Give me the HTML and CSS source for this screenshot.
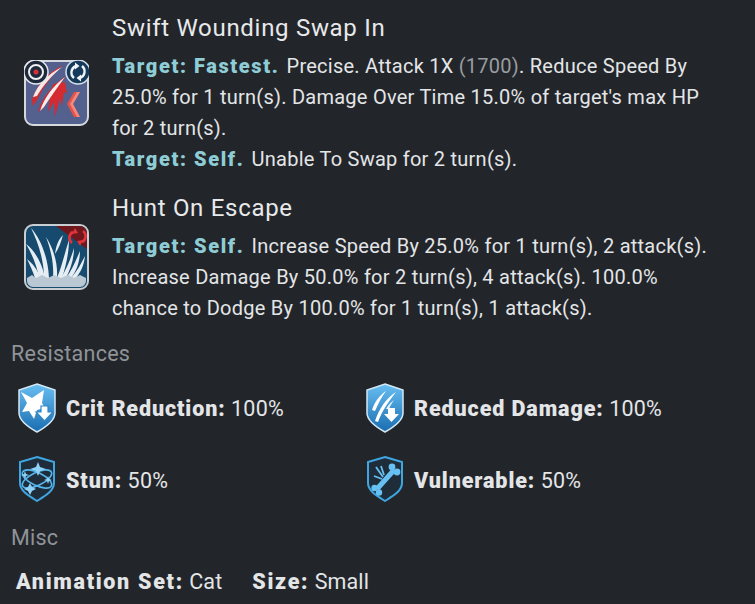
FILE: index.html
```html
<!DOCTYPE html>
<html lang="en">
<head>
<meta charset="utf-8">
<title>Abilities</title>
<link rel="stylesheet" href="styles.css">
</head>
<body>
<section class="ability ability-first">
  <div class="ability-icon icon-swap">
    <svg viewBox="0 0 65 66" width="65" height="66">
      <rect x="1" y="1" width="63" height="64" rx="8" fill="#54608e" stroke="#d5d9de" stroke-width="2"/>
      <path d="M29 24 L41 22 L43 34 L40 32 L38 46 L36 38 L31 57 L30 42 L24 52 L26 36Z" fill="#d42a30"/>
      <path d="M8 40 C12 26 22 14 39 5 C28 15 20 26 13 40 L9 46Z" fill="#d42a30"/>
      <path d="M9 37 C14 24 24 14 38 7 C27 16 19 26 13 36Z" fill="#f4e8e8"/>
      <path d="M14 52 C18 38 28 25 42 16 C33 27 26 38 19 48Z" fill="#d42a30"/>
      <path d="M16 51 C20 38 29 26 41 17 C33 28 26 38 20 47Z" fill="#f6eeee"/>
      <path d="M56 32 L49 44 L56 57 H50 L43 44 L50 32Z" fill="#e8524a"/>
      <path d="M56 32 L49 44 L56 57 H53 L46 44 L53 32Z" fill="#f08a7e"/>
      <circle cx="12" cy="12" r="12" fill="#1e2a3c" stroke="#e8eaee" stroke-width="1.500"/>
      <circle cx="12" cy="12" r="7" fill="none" stroke="#eef0f2" stroke-width="2"/>
      <circle cx="12" cy="12" r="2.500" fill="#d8303a"/>
      <circle cx="54" cy="12" r="12" fill="#153a5c" stroke="#d8e2ea" stroke-width="1.500"/>
      <path d="M52 6 A7 7 0 0 0 50 18 M56 18 A7 7 0 0 0 58 6" fill="none" stroke="#f2f4f6" stroke-width="2.400"/>
      <path d="M51 2.500 L55.500 6 L51 9.500Z M57 21.500 L52.500 18 L57 14.500Z" fill="#f2f4f6"/>
    </svg>
  </div>
  <div class="ability-body">
    <h2 class="ability-name">Swift Wounding Swap In</h2>
    <p class="ability-line"><b class="target">Target: Fastest.</b> Precise. Attack 1X <span class="muted">(1700)</span>. Reduce Speed By 25.0% for 1 turn(s). Damage Over Time 15.0% of target's max HP for 2 turn(s).</p>
    <p class="ability-line"><b class="target">Target: Self.</b> Unable To Swap for 2 turn(s).</p>
  </div>
</section>
<section class="ability">
  <div class="ability-icon icon-hunt">
    <svg viewBox="0 0 65 66" width="65" height="66">
      <rect x="1" y="1" width="63" height="64" rx="8" fill="#164a6e" stroke="#c9ced3" stroke-width="2"/>
      <path d="M32 2 H56 A7 7 0 0 1 63 9 V25Z" fill="#6e181e"/>
      <path d="M49 8 A6.500 6.500 0 0 0 48 19 M58 18 A6.500 6.500 0 0 0 59 7" fill="none" stroke="#e0333a" stroke-width="2.600"/>
      <path d="M51 4 L54 9 L48 10Z M56 22 L53 17 L59 16Z" fill="#e0333a"/>
      <g fill="#e6eef3">
        <path d="M7 4 C16 14 24 32 25 54 L20 54 C20 36 14 18 7 4Z"/>
        <path d="M2 20 C10 26 18 38 21 54 L15 54 C13 42 8 30 2 20Z"/>
        <path d="M3 35 C9 40 14 46 16 54 L11 54 C9 48 6 41 3 35Z"/>
        <path d="M22 13 C29 24 34 38 33 54 L29 54 C30 40 27 26 22 13Z"/>
        <path d="M39 11 C37 18 35 24 31 30 C32 22 34 16 39 11Z"/>
        <path d="M45 16 C45 28 42 42 38 54 L33 54 C38 42 41 28 45 16Z"/>
        <path d="M50 24 C50 36 46 46 42 54 L37 54 C43 44 47 34 50 24Z"/>
        <path d="M56 27 C56 38 52 48 47 54 L42 54 C48 46 52 36 56 27Z"/>
        <path d="M61 32 C60 42 56 49 52 54 L47 54 C53 47 57 40 61 32Z"/>
      </g>
      <path d="M3 54 L8 51 L12 54 L18 51 L24 54 L30 51 L37 54 L44 51 L50 54 L56 51 L62 54 V57 A6 6 0 0 1 56 63 H9 A6 6 0 0 1 3 57Z" fill="#b9c8d2"/>
    </svg>
  </div>
  <div class="ability-body">
    <h2 class="ability-name">Hunt On Escape</h2>
    <p class="ability-line"><b class="target">Target: Self.</b> Increase Speed By 25.0% for 1 turn(s), 2 attack(s). Increase Damage By 50.0% for 2 turn(s), 4 attack(s). 100.0% chance to Dodge By 100.0% for 1 turn(s), 1 attack(s).</p>
  </div>
</section>
<h3 class="section-title">Resistances</h3>
<div class="resist-grid">
  <div class="resist">
    <svg class="shield" viewBox="0 0 38 50" width="38" height="50"><defs><linearGradient id="blue" x1="0" y1="0" x2="0" y2="1"><stop offset="0" stop-color="#68bff2"/><stop offset="1" stop-color="#1a6db0"/></linearGradient></defs><path d="M19 1 L37 7 V30 C37 38 28 44 19 49 C10 44 1 38 1 30 V7Z" fill="url(#blue)" stroke="#d3e8f5" stroke-width="1.500"/><path d="M3 9 L14 15 L26 7 L24 20 L27 25 L19 27 L16 36 L11 28 L4 29 L9 20Z" fill="#fff"/><path d="M23 23 H30 V29 H35 L26.500 38 L18 29 H23Z" fill="#fff" stroke="#2f86c8" stroke-width="1.200"/></svg>
    <span class="resist-text"><b>Crit Reduction:</b> 100%</span>
  </div>
  <div class="resist">
    <svg class="shield" viewBox="0 0 38 50" width="38" height="50"><path d="M19 1 L37 7 V30 C37 38 28 44 19 49 C10 44 1 38 1 30 V7Z" fill="url(#blue)" stroke="#d3e8f5" stroke-width="1.500"/><path d="M6 27 C9 18 14 12 20 8 C15 15 12 21 9 28Z M9 38 C13 26 20 15 30 9 C23 18 16 28 12 39Z" fill="#fff"/><path d="M20 26 C22 22 25 19 28 17 C26 20 24 23 23 26Z" fill="#e4f2fb"/><path d="M22 25 H29 V31 H33 L25.500 39 L18 31 H22Z" fill="#fff"/></svg>
    <span class="resist-text"><b>Reduced Damage:</b> 100%</span>
  </div>
  <div class="resist">
    <svg class="shield" viewBox="0 0 38 50" width="38" height="50"><path d="M19 2 L36 7 V28 C36 36 27 41 19 46 C11 41 2 36 2 28 V7Z" fill="#1f2d3a" stroke="#3fa6e2" stroke-width="2"/><g fill="none" stroke="#56b6ee" stroke-width="1.600"><ellipse cx="19" cy="24" rx="16" ry="6.500" transform="rotate(26 19 24)"/><ellipse cx="19" cy="24" rx="16" ry="6.500" transform="rotate(-26 19 24)"/></g><path d="M20 7 L22 12 L28 14 L22 16 L20 21 L18 16 L12 14 L18 12Z M12 28 L14 32 L18 34 L14 36 L12 40 L10 36 L6 34 L10 32Z M30 21 L31 24 L34 25 L31 26 L30 29 L29 26 L26 25 L29 24Z M7 16 L8 19 L11 20 L8 21 L7 24 L6 21 L3 20 L6 19Z" fill="#8fd2f7"/></svg>
    <span class="resist-text"><b>Stun:</b> 50%</span>
  </div>
  <div class="resist">
    <svg class="shield" viewBox="0 0 38 50" width="38" height="50"><path d="M19 2 L36 7 V28 C36 36 27 41 19 46 C11 41 2 36 2 28 V7Z" fill="#1f2d3a" stroke="#3fa6e2" stroke-width="2"/><path d="M11 34 L28 15" stroke="#67c0f2" stroke-width="5"/><circle cx="26" cy="12" r="3.400" fill="#67c0f2"/><circle cx="31" cy="17" r="3.400" fill="#67c0f2"/><circle cx="8.500" cy="33" r="3.200" fill="#67c0f2"/><circle cx="13" cy="37.500" r="3.200" fill="#67c0f2"/><path d="M17 22 L10 12 M16 24 L8 21 M18 20 L15 11" stroke="#67c0f2" stroke-width="1.800"/></svg>
    <span class="resist-text"><b>Vulnerable:</b> 50%</span>
  </div>
</div>
<h3 class="section-title section-misc">Misc</h3>
<div class="misc-row">
  <span><b>Animation Set:</b> Cat</span>
  <span><b>Size:</b> Small</span>
</div>
</body>
</html>
```
FILE: styles.css
```css
html, body { margin: 0; padding: 0; }
body {
  width: 755px;
  height: 604px;
  overflow: hidden;
  background: #22262b;
  color: #e4e5e7;
  font-family: Roboto, "Noto Sans", sans-serif;
  font-size: 20px;
  line-height: 31px;
  letter-spacing: 0.25px;
  box-sizing: border-box;
  padding-top: 14px;
}
.ability { display: flex; padding-left: 24px; }
.ability-first { margin-bottom: 19px; }
.ability-icon { width: 65px; margin-right: 23px; flex: none; }
.icon-swap { padding-top: 46px; }
.icon-hunt { padding-top: 30px; }
.ability-icon svg { display: block; }
.ability-body { flex: 1; padding-right: 40px; }
.ability-name { margin: 0 0 9px; font-size: 24px; font-weight: 400; line-height: 28px; letter-spacing: 0.7px; color: #e8e9ea; }
.ability-line { margin: 0; }
.target { color: #8fcdd6; font-weight: 900; letter-spacing: 1.6px; margin-right: 2px; }
.muted { color: #9a9da1; }
.section-title { margin: 16px 0 0 11px; font-size: 21.500px; font-weight: 400; line-height: 28px; color: #909397; }
.resist-grid { display: grid; grid-template-columns: 348px 1fr; padding-left: 18px; margin-top: 15px; row-gap: 22px; }
.resist { display: flex; align-items: center; gap: 10px; height: 50px; font-size: 21.500px; letter-spacing: 0.2px; }
.shield { display: block; flex: none; }
.resist b { font-weight: 900; letter-spacing: 0.9px; margin-right: 0; }
.section-misc { margin-top: 19px; }
.misc-row { display: flex; gap: 30px; padding-left: 16px; margin-top: 14px; font-size: 21.500px; letter-spacing: 0.1px; }
.misc-row b { font-weight: 900; letter-spacing: 1.7px; }
```
